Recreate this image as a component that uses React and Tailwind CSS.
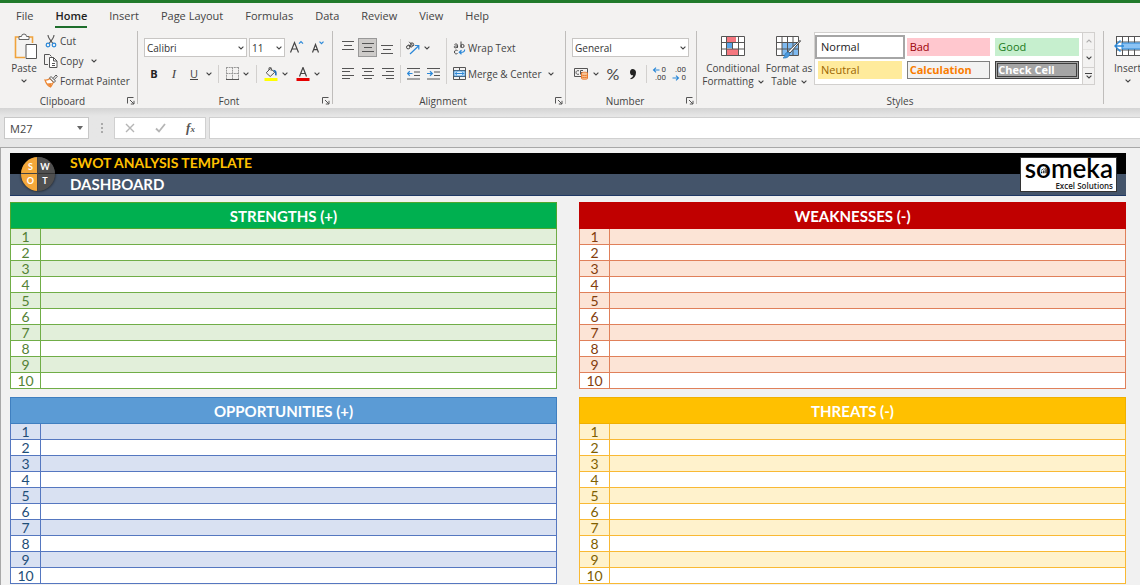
import React from "react";

const TABS = ["File", "Home", "Insert", "Page Layout", "Formulas", "Data", "Review", "View", "Help"];

function Chevron({ className = "" }) {
  return (
    <svg viewBox="0 0 6 4" className={"w-[6px] h-[4px] " + className} fill="none" stroke="#444" strokeWidth="1.1" aria-hidden="true">
      <path d="M.6.6 3 3 5.4.6" />
    </svg>
  );
}

function Sep({ className = "h-[18px]" }) {
  return <span className={"w-px shrink-0 bg-[#d2d0ce] " + className} />;
}

function IconButton({ label, className = "w-5", children }) {
  return (
    <button type="button" aria-label={label} className={"h-[19px] shrink-0 flex items-center justify-center hover:bg-[#dcdcdc] " + className}>
      {children}
    </button>
  );
}

function MenuArrow({ label }) {
  return (
    <IconButton label={label} className="w-[10px]">
      <Chevron />
    </IconButton>
  );
}

function Group({ title, launcher = true, className = "", children }) {
  return (
    <section aria-label={title} className={"relative flex shrink-0 flex-col " + className}>
      <div className="h-16">{children}</div>
      <div className="flex h-[14px] items-center pr-px">
        <span className="flex-1 text-center">{title}</span>
        {launcher && (
          <button type="button" aria-label={title + " settings"} className="flex w-3 justify-center">
            <svg viewBox="0 0 8 8" className="size-2" fill="none" stroke="#555" aria-hidden="true">
              <path d="M.5 6.5v-6h6M3 3l4 4M7 3.8V7H3.8" />
            </svg>
          </button>
        )}
      </div>
      <span className="absolute right-0 top-px h-[73px] w-px bg-[#bfbdbb]" />
    </section>
  );
}

function Picker({ label, value, options, className }) {
  return (
    <label className={"relative block " + className}>
      <span className="sr-only">{label}</span>
      <select defaultValue={value} className="block h-[19px] w-full appearance-none border border-[#c8c6c4] bg-white py-0 pl-[2px] text-[10px] leading-[14px] text-[#333] outline-none">
        {options.map((o) => (
          <option key={o}>{o}</option>
        ))}
      </select>
      <Chevron className="pointer-events-none absolute right-[3px] top-[8px]" />
    </label>
  );
}

function Lines({ rows, className = "w-3 h-[13px]" }) {
  return (
    <svg viewBox="0 0 12 13" className={className} stroke="#555" aria-hidden="true">
      {rows.map(([x1, x2, y], i) => (
        <path key={i} d={`M${x1} ${y}H${x2}`} />
      ))}
    </svg>
  );
}

function Clipboard() {
  return (
    <Group title="Clipboard" className="w-[138px]">
      <div className="flex pl-[9px] pt-[3px]">
        <button type="button" className="flex w-[30px] flex-col items-center">
          <svg viewBox="0 0 24 27" className="ml-1 h-[27px] w-6" fill="none" aria-hidden="true">
            <path d="M5 4H1.5v20.5H11M15 4h3.5v6" stroke="#f0a33c" strokeWidth="1.6" />
            <path d="M5 6.500V3.500h2.500a2.500 2.500 0 0 1 5 0H15v3z" fill="#fafafa" stroke="#666" />
            <path d="M12 11.500h10.500v14H12z" fill="#fff" stroke="#555" />
          </svg>
          <span className="leading-4">Paste</span>
          <Chevron className="mt-[3px]" />
        </button>
        <div className="flex flex-col pl-[5px] pt-px">
          <button type="button" className="flex h-[14px] items-center gap-[2px]">
            <svg viewBox="0 0 14 14" className="size-[14px]" fill="none" aria-hidden="true">
              <path d="M4 1c0 3 2.500 5.500 5 8.500M10 1c0 3-2.500 5.500-5 8.500" stroke="#555" strokeWidth="1.100" />
              <circle cx="4" cy="11" r="1.800" stroke="#2b88d8" strokeWidth="1.200" />
              <circle cx="10" cy="11" r="1.800" stroke="#2b88d8" strokeWidth="1.200" />
            </svg>
            Cut
          </button>
          <button type="button" className="mt-[6px] flex h-[14px] items-center gap-[2px]">
            <svg viewBox="0 0 14 14" className="size-[14px]" fill="none" stroke="#555" aria-hidden="true">
              <path d="M4 10.500H.5v-10h5l2 2" />
              <path d="M5.500 3.500h4l3.500 3.500v6.500H5.500z" fill="#fff" />
              <path d="M9.500 3.500V7H13M8 9.500h3M8 11.500h3" />
            </svg>
            Copy
            <Chevron className="ml-[6px]" />
          </button>
          <button type="button" className="mt-[6px] flex h-[14px] items-center gap-[2px] whitespace-nowrap">
            <svg viewBox="0 0 14 14" className="size-[14px]" fill="none" aria-hidden="true">
              <path d="M1 6c2 .3 3.500-.2 5-1.500L9.500 8C8.500 10 7.500 12 6.500 13 4 12 2 9 1 6z" fill="#fff" stroke="#ed8733" strokeWidth="1.200" />
              <path d="M3 9.500 8 9l-1.500 4z" fill="#ed8733" />
              <path d="m5.500 4 1.500-1.500L11.500 7 10 8.500zM9 4.500 12 1l1.300 1.300L10.200 5.700" fill="#fff" stroke="#555" />
            </svg>
            Format Painter
          </button>
        </div>
      </div>
    </Group>
  );
}

function Font() {
  return (
    <Group title="Font" className="w-[195px]">
      <div className="flex flex-col gap-[7px] pl-[6px] pt-2">
        <div className="flex items-center">
          <Picker label="Font" value="Calibri" options={["Calibri", "Arial", "Cambria"]} className="w-[103px]" />
          <Picker label="Font size" value="11" options={["9", "10", "11", "12", "14"]} className="ml-[2px] w-9" />
          <IconButton label="Increase font size" className="ml-px w-[21px]">
            <svg viewBox="0 0 15 15" className="size-[15px]" fill="none" aria-hidden="true">
              <path d="M1.500 12.500 5.500 2.500l4 10M3 9h5" stroke="#444" strokeWidth="1.200" />
              <path d="m10 3.700 2-2 2 2" stroke="#2b88d8" strokeWidth="1.200" />
            </svg>
          </IconButton>
          <IconButton label="Decrease font size" className="w-[21px]">
            <svg viewBox="0 0 15 15" className="size-[15px]" fill="none" aria-hidden="true">
              <path d="m2.500 12.500 3-8 3 8M3.600 9.700h3.800" stroke="#444" strokeWidth="1.200" />
              <path d="m9.500 1.700 2 2 2-2" stroke="#2b88d8" strokeWidth="1.200" />
            </svg>
          </IconButton>
        </div>
        <div className="flex items-center">
          <IconButton label="Bold"><b className="text-[11px] text-[#222]">B</b></IconButton>
          <IconButton label="Italic"><i className="font-['Liberation_Serif',serif] text-[13px]">I</i></IconButton>
          <IconButton label="Underline"><u className="text-[11px]">U</u></IconButton>
          <MenuArrow label="Underline styles" />
          <Sep className="mx-1 h-[18px]" />
          <IconButton label="Borders" className="w-[18px]">
            <svg viewBox="0 0 13 13" className="size-[13px]" fill="none" stroke="#999" aria-hidden="true">
              <path d="M.5 0v12M12.500 0v12M0 .5h13M6.500 0v12M0 6.500h13" strokeDasharray="2 .6" />
              <path d="M0 12.500h13" stroke="#555" />
            </svg>
          </IconButton>
          <MenuArrow label="Border styles" />
          <Sep className="mx-[5px] h-[18px]" />
          <IconButton label="Fill colour" className="w-[18px]">
            <svg viewBox="0 0 14 14" className="size-[14px]" fill="none" aria-hidden="true">
              <path d="M6.500 1.500 2.200 5.800l4 3.700 4.500-4.200zM5 3V.8h2.200v3" stroke="#555" />
              <path d="M9.500 3.500c2 0 2.700 1.500 2.300 4.800" stroke="#1f6cb8" strokeWidth="1.600" />
              <path d="M.5 11h13v3H.5z" fill="#ff0" />
            </svg>
          </IconButton>
          <MenuArrow label="More fill colours" />
          <IconButton label="Font colour" className="ml-1 w-[18px]">
            <svg viewBox="0 0 14 14" className="size-[14px]" fill="none" aria-hidden="true">
              <path d="m3.500 9.500 3.500-9 3.500 9M4.700 6.500h4.600" stroke="#444" strokeWidth="1.200" />
              <path d="M.5 11h13v3H.5z" fill="#e60000" />
            </svg>
          </IconButton>
          <MenuArrow label="More font colours" />
        </div>
      </div>
    </Group>
  );
}

function Indent({ right }) {
  return (
    <svg viewBox="0 0 13 13" className="size-[13px]" fill="none" aria-hidden="true">
      <path d="M0 1.500h13M7 5h6M7 8.500h6M0 12h13" stroke="#555" />
      <path d={right ? "M0 6.500h5M3 4.300 5.300 6.500 3 8.700" : "M.5 6.500h5M2.800 4.300.5 6.500l2.300 2.200"} stroke="#2b88d8" strokeWidth="1.200" />
    </svg>
  );
}

function Alignment() {
  return (
    <Group title="Alignment" className="w-[233px]">
      <div className="flex pl-[5px] pt-2">
        <div className="flex w-[108px] flex-col gap-[7px]">
          <div className="flex items-center">
            <IconButton label="Top align"><Lines rows={[[0, 12, 0.5], [2, 10, 4.5], [0, 12, 8.5]]} /></IconButton>
            <IconButton label="Middle align" className="w-[19px] border border-[#999] bg-[#cdcbc9]"><Lines rows={[[0, 12, 2.5], [2, 10, 6.5], [0, 12, 10.5]]} /></IconButton>
            <IconButton label="Bottom align"><Lines rows={[[0, 12, 4.5], [2, 10, 8.5], [0, 12, 12.5]]} /></IconButton>
            <Sep className="ml-[3px] h-[18px]" />
            <IconButton label="Orientation" className="ml-px w-5">
              <svg viewBox="0 0 15 14" className="h-[14px] w-[15px]" fill="none" aria-hidden="true">
                <g stroke="#444" strokeWidth="1">
                  <circle cx="3.200" cy="6.200" r="1.700" />
                  <path d="m3.600 3.600 2.800 3" />
                  <circle cx="7" cy="3.600" r="1.700" />
                  <path d="m4.200.8 3.800 4" />
                </g>
                <path d="m5 13 8.500-8M9.800 4.500h4v4" stroke="#2b88d8" strokeWidth="1.200" />
              </svg>
            </IconButton>
            <MenuArrow label="Orientation options" />
          </div>
          <div className="flex items-center">
            <IconButton label="Align left"><Lines rows={[[0, 12, 1.5], [0, 8, 4.5], [0, 12, 8.5], [0, 8, 11.5]]} /></IconButton>
            <IconButton label="Centre"><Lines rows={[[0, 12, 1.5], [2, 10, 4.5], [0, 12, 8.5], [2, 10, 11.5]]} /></IconButton>
            <IconButton label="Align right"><Lines rows={[[0, 12, 1.5], [4, 12, 4.5], [0, 12, 8.5], [4, 12, 11.5]]} /></IconButton>
            <Sep className="ml-[2px] h-[18px]" />
            <IconButton label="Decrease indent" className="ml-[2px] w-5"><Indent /></IconButton>
            <IconButton label="Increase indent"><Indent right /></IconButton>
          </div>
        </div>
        <Sep className="h-[46px]" />
        <div className="flex flex-col gap-[7px] pl-[6px]">
          <button type="button" className="flex h-[19px] items-center gap-[2px]">
            <svg viewBox="0 0 12 14" className="h-[14px] w-[13px]" fill="none" stroke="#444" aria-hidden="true">
              <path d="M1 3.500c1-.8 3-.8 3 .8v2.500M4 5c-3-.2-3.500.4-3.300 1.200C1 7.200 3.500 7 4 5.800M7.500.500v6.300" />
              <circle cx="9" cy="5" r="1.600" />
              <path d="M4 9.500c-1.500-.8-3-.3-3 1.500s1.500 2.300 3 1.500" />
              <path d="M11 8.500c.5 2-1 3-5 2.800M8 9.200 5.800 11.300 8 13.300" stroke="#2b88d8" strokeWidth="1.200" />
            </svg>
            Wrap Text
          </button>
          <div className="flex items-center">
            <button type="button" className="flex h-[19px] items-center gap-[2px] whitespace-nowrap">
              <svg viewBox="0 0 13 13" className="size-[13px]" fill="none" aria-hidden="true">
                <path d="M.5.5h12v12H.5zM.5 3.500h12M.5 9.500h12M6.500.500v3M6.500 9.500v3" stroke="#555" />
                <path d="M1 4h11v5H1z" fill="#e3f0fb" stroke="#2b88d8" strokeWidth=".8" />
                <path d="M2 6.500h9M4 4.700 2.200 6.500 4 8.300M9 4.700l1.800 1.800L9 8.300" stroke="#2b88d8" />
              </svg>
              Merge &amp; Center
            </button>
            <span className="w-1" />
            <MenuArrow label="Merge options" />
          </div>
        </div>
      </div>
    </Group>
  );
}

function DecimalIcon({ top, bottom, right }) {
  return (
    <span className="relative flex h-4 w-[14px] flex-col font-['Roboto',sans-serif] text-[8px] leading-[8px] text-[#444]">
      <span className="self-end">{top}</span>
      <span className="self-end">{bottom}</span>
      <svg viewBox="0 0 7 6" className={"absolute left-0 h-[6px] w-2 " + (right ? "bottom-px" : "top-px")} fill="none" stroke="#2b88d8" strokeWidth="1.100" aria-hidden="true">
        <path d={right ? "M0 3h6M3.500.6 6 3 3.500 5.400" : "M7 3H1M3.500.6 1 3l2.500 2.400"} />
      </svg>
    </span>
  );
}

function NumberGroup() {
  return (
    <Group title="Number" className="w-[131px]">
      <div className="flex flex-col gap-[7px] pl-[6px] pt-2">
        <Picker label="Number format" value="General" options={["General", "Number", "Currency", "Date"]} className="w-[117px]" />
        <div className="flex items-center">
          <IconButton label="Accounting format" className="w-[19px]">
            <svg viewBox="0 0 15 13" className="h-[13px] w-[15px]" fill="none" aria-hidden="true">
              <path d="M.5 1.500h13v8H.5z" stroke="#555" />
              <path d="M5 3.800c-2-.5-3 .3-3 1.700s1 2.200 3 1.700M9 3.500H6.500v4M6.500 5.500H9" stroke="#555" />
              <path d="M7.500 6c0-1 6-1 6 0v5.500c0 1-6 1-6 0z" fill="#f7c596" stroke="#ed7d31" />
              <path d="M7.500 8c1 .7 5 .7 6 0M7.500 10c1 .7 5 .7 6 0" stroke="#ed7d31" />
            </svg>
          </IconButton>
          <MenuArrow label="Accounting options" />
          <IconButton label="Percent style" className="ml-[2px] w-5"><span className="font-['Lato',sans-serif] text-[16px]">%</span></IconButton>
          <IconButton label="Comma style">
            <svg viewBox="0 0 8 12" className="h-3 w-2" aria-hidden="true">
              <path d="M3.500 1C5.500 1 7 2.400 7 4.500 7 8 5 10.500 1.800 11.300l-.5-1C3 9.600 4 8.500 4.200 7.300 2.300 7.600 1 6.300 1 4.200 1 2.300 2 1 3.500 1z" fill="#222" />
            </svg>
          </IconButton>
          <Sep className="ml-[3px] h-[18px]" />
          <IconButton label="Increase decimal" className="ml-[2px] w-5"><DecimalIcon top="0" bottom=".00" /></IconButton>
          <IconButton label="Decrease decimal" className="w-5"><DecimalIcon top=".00" bottom="0" right /></IconButton>
        </div>
      </div>
    </Group>
  );
}

const CELL_STYLES = [
  ["Normal", "pl-[3px] bg-white text-[#222] outline-2 outline-offset-1 outline-[#a6a6a6]"],
  ["Bad", "pl-[3px] bg-[#ffc7ce] text-[#9c0006]"],
  ["Good", "pl-[3px] bg-[#c6efce] text-[#1b7a1b]"],
  ["Neutral", "pl-[3px] bg-[#ffeb9c] text-[#9c6500]"],
  ["Calculation", "pl-[2px] border border-[#7f7f7f] bg-[#f2f2f2] font-bold text-[#fa7d00]"],
  ["Check Cell", "border-3 border-double border-[#3f3f3f] bg-[#a5a5a5] font-bold text-white"],
];

function Styles() {
  return (
    <Group title="Styles" launcher={false} className="w-[407px]">
      <div className="flex pl-[6px] pt-[2px]">
        <button type="button" className="flex w-[60px] flex-col items-center pt-1 leading-[13px]">
          <svg viewBox="0 0 24 20" className="mb-[6px] h-5 w-6" fill="none" aria-hidden="true">
            <path d="M.5.5h23v19H.5z" fill="#fff" />
            <path d="M5 1h10v5H5zM5 13h12v6H5z" fill="#f4777f" />
            <path d="M5 7h7v5H5z" fill="#5aa5e8" />
            <path d="M.5.5h23v19H.5zM5.500 0v20M11.500 6v7M17.500 0v20M0 6.500h24M0 13h24" stroke="#555" />
          </svg>
          <span>Conditional</span>
          <span className="flex items-center gap-1">Formatting <Chevron /></span>
        </button>
        <button type="button" className="ml-[2px] flex w-[48px] flex-col items-center whitespace-nowrap pt-1 leading-[13px]">
          <svg viewBox="0 0 26 24" className="h-6 w-[26px]" fill="none" aria-hidden="true">
            <path d="M.5.5h22v19H.5z" fill="#fff" />
            <path d="M6 7h16v12H6z" fill="#7fbaf0" />
            <path d="M.5.5h22v19H.5zM6 0v20M11.500 0v20M17 0v20M0 6.500h23M0 13h23" stroke="#555" />
            <path d="M24.500 5 14 17l-2-1.500L22.500 5.500c1-1 2.500-1 2-.5z" fill="#fff" stroke="#444" />
            <path d="M13.500 17c.5 3-2 5.500-6.500 5 1.500-1 1.500-2 2-3.500.6-2 3-3 4.500-1.500z" fill="#4a98dc" stroke="#2b78b8" strokeWidth=".7" />
          </svg>
          <span className="mt-[2px]">Format as</span>
          <span className="flex items-center gap-1">Table <Chevron /></span>
        </button>
        <div className="ml-px mr-[9px] flex h-[53px] flex-1 border border-[#d2d0ce] bg-white">
          <div className="grid flex-1 grid-cols-3 content-center gap-[5px] pl-[3px] pr-[3px]">
            {CELL_STYLES.map(([name, look]) => (
              <button key={name} type="button" className={"flex h-[18px] items-center text-left text-[11px] " + look}>
                {name}
              </button>
            ))}
          </div>
          <div className="flex w-3 flex-col divide-y divide-[#d2d0ce] border-l border-[#d2d0ce] bg-[#f3f2f1]">
            <button type="button" aria-label="Previous styles" className="flex flex-1 items-center justify-center opacity-40"><Chevron className="rotate-180" /></button>
            <button type="button" aria-label="Next styles" className="flex flex-1 items-center justify-center"><Chevron /></button>
            <button type="button" aria-label="All styles" className="flex flex-1 flex-col items-center justify-center gap-px">
              <span className="h-px w-[7px] bg-[#444]" />
              <Chevron />
            </button>
          </div>
        </div>
      </div>
    </Group>
  );
}

function Cells() {
  return (
    <section aria-label="Cells" className="flex-1 overflow-hidden pl-[10px] pt-[6px]">
      <button type="button" className="flex w-[27px] flex-col items-center leading-[13px]">
        <svg viewBox="0 0 27 20" className="mb-[6px] h-5 w-[27px]" fill="none" aria-hidden="true">
          <path d="M2.500.5h24v19h-24z" fill="#fff" />
          <path d="M2.500.5h24.500M2.500 19.500H27M2.500 0v20M8.500 0v20M14.500 0v20M20.500 0v20M2 6h25M2 14h25" stroke="#555" />
          <path d="M8 7h19v6H8z" fill="#8cc3f4" stroke="#2b88d8" />
          <path d="M10 10H1M6.500 4.500 1 10l5.500 5.500" stroke="#2b88d8" strokeWidth="1.400" />
        </svg>
        Insert
        <Chevron className="mt-1" />
      </button>
    </section>
  );
}

function FormulaBar() {
  return (
    <div className="flex h-10 items-start border-b border-[#a8a8a8] bg-[#e5e5e5] bg-linear-to-b from-[#d4d4d4] to-[#e6e6e6] to-20% pl-1 pt-[9px]">
      <label className="relative">
        <span className="sr-only">Name box</span>
        <input defaultValue="M27" className="block h-[22px] w-[85px] border border-[#c8c8c8] bg-white pl-[5px] text-[11px] text-[#444] outline-none" />
        <svg viewBox="0 0 6 4" className="absolute right-[6px] top-[9px] h-1 w-[6px]" aria-hidden="true"><path d="M0 0h6L3 4z" fill="#666" /></svg>
      </label>
      <svg viewBox="0 0 2 10" className="ml-[12px] mt-[6px] h-[10px] w-[2px]" fill="#aaa" aria-hidden="true">
        <path d="M0 0h2v2H0zM0 4h2v2H0zM0 8h2v2H0z" />
      </svg>
      <div className="ml-[11px] flex h-[22px] w-[92px] items-center justify-around border border-[#d0d0d0] bg-white">
        <button type="button" aria-label="Cancel">
          <svg viewBox="0 0 10 10" className="size-[10px]" stroke="#b5b5b5" strokeWidth="1.400" aria-hidden="true"><path d="m1 1 8 8M9 1 1 9" /></svg>
        </button>
        <button type="button" aria-label="Enter">
          <svg viewBox="0 0 11 10" className="h-[10px] w-[11px]" fill="none" stroke="#b5b5b5" strokeWidth="1.800" aria-hidden="true"><path d="m1 5.500 3 3L10 1" /></svg>
        </button>
        <button type="button" className="font-['Liberation_Serif',serif] text-[13px] font-bold italic leading-4 text-[#555]">
          f<span className="text-[9px]">x</span>
        </button>
      </div>
      <input aria-label="Formula" className="ml-[3px] h-[22px] min-w-0 flex-1 border border-r-0 border-[#d0d0d0] bg-white px-2 text-[11px] outline-none" />
    </div>
  );
}

function SwotBadge() {
  return (
    <div className="grid size-[34px] grid-cols-2 grid-rows-2 overflow-hidden rounded-full bg-[#333] text-center font-['Lato',sans-serif] text-[9px] font-bold leading-[14px] text-white shadow-[0_0_2px_1px_rgba(0,0,0,0.35)]">
      <span className="border-b border-r border-[#444] bg-[#f4a83a] pl-[3px] pt-[3px]">S</span>
      <span className="border-b border-[#333] bg-[#505050] pr-[3px] pt-[3px]">W</span>
      <span className="border-r border-[#444] bg-[#f4a83a] pl-[3px]">O</span>
      <span className="bg-[#505050] pr-[3px]">T</span>
    </div>
  );
}

function SomekaLogo() {
  return (
    <div className="flex h-[35px] w-[97px] flex-col items-end justify-end gap-[3px] border border-[#333] bg-white pr-[3px] text-black">
      <div className="relative font-['Lato',sans-serif] text-[26px] font-semibold leading-[20px]">
        someka
        <svg viewBox="0 0 8 8" className="absolute left-[16px] top-[9px] size-[7px]" aria-hidden="true">
          <path d="M0 7V5h1.500v2zM2.500 7V4H4v3zM5 7V2.500h1.500V7z" fill="#111" />
          <path d="m0 4 3-2 1 .5L7 0" stroke="#111" strokeWidth=".8" fill="none" />
        </svg>
      </div>
      <div className="text-[8px] font-semibold leading-[10px] text-[#222]">Excel Solutions</div>
    </div>
  );
}

function Banner() {
  return (
    <header className="flex h-[43px] items-center border-b border-[#1f3864] bg-linear-to-b from-black from-50% to-[#44546a] to-50% pl-[11px] pr-[9px]">
      <SwotBadge />
      <div className="flex-1 pl-[15px] font-['Lato',sans-serif] font-bold">
        <h1 className="text-[14px] leading-[20px] text-[#ffc000]">SWOT ANALYSIS TEMPLATE</h1>
        <h2 className="text-[15px] leading-[22px] text-white">DASHBOARD</h2>
      </div>
      <SomekaLogo />
    </header>
  );
}

const QUADRANTS = [
  { title: "STRENGTHS (+)", head: "bg-[#00b050] border-[#4ea72e]", cell: "border-[#70ad47]", band: "odd:bg-[#e2efda]", num: "text-[#548235]" },
  { title: "WEAKNESSES (-)", head: "bg-[#c00000] border-[#c00000]", cell: "border-[#e0805a]", band: "odd:bg-[#fce4d6]", num: "text-[#833c0c]" },
  { title: "OPPORTUNITIES (+)", head: "bg-[#5b9bd5] border-[#3f7fc0]", cell: "border-[#5577c0]", band: "odd:bg-[#d9e1f2]", num: "text-[#1f4e78]" },
  { title: "THREATS (-)", head: "bg-[#ffc000] border-[#f0b000]", cell: "border-[#f9b934]", band: "odd:bg-[#fff2cc]", num: "text-[#806000]" },
];

function Quadrant({ q }) {
  return (
    <table className="w-full table-fixed border-collapse">
      <colgroup>
        <col className="w-[30px]" />
        <col />
      </colgroup>
      <thead>
        <tr className="h-[26px]">
          <th colSpan={2} className={"border p-0 font-['Lato',sans-serif] text-[15px] font-bold leading-5 text-white " + q.head}>{q.title}</th>
        </tr>
      </thead>
      <tbody>
        {Array.from({ length: 10 }, (_, i) => (
          <tr key={i} className={"h-4 bg-white " + q.band}>
            <th scope="row" className={"border p-0 font-['Lato',sans-serif] text-[14px] font-normal leading-[15px] " + q.cell + " " + q.num}>{i + 1}</th>
            <td className={"border p-0 " + q.cell} />
          </tr>
        ))}
      </tbody>
    </table>
  );
}

export default function App() {
  return (
    <div className="flex min-h-screen flex-col overflow-x-hidden bg-[#f1f1f1] font-['Open_Sans',sans-serif] text-[10px] leading-[14px] text-[#444]">
      <div className="border-t-3 border-[#217a2b] bg-[#f3f2f1]">
        <nav className="flex h-[27px] items-start gap-[22px] whitespace-nowrap pl-4 pt-[2px] text-[11px]">
          {TABS.map((t) => (
            <button
              key={t}
              type="button"
              className={t === "Home" ? "border-b-2 border-[#1e6e2c] font-semibold leading-[21px] text-[#222]" : "leading-[21px]"}
            >
              {t}
            </button>
          ))}
        </nav>
        <div className="flex h-[78px]">
          <Clipboard />
          <Font />
          <Alignment />
          <NumberGroup />
          <Styles />
          <Cells />
        </div>
      </div>
      <FormulaBar />
      <main className="flex-1 border-l border-[#a8a8a8] pl-[9px] pr-[14px] pt-[5px]">
        <Banner />
        <div className="mt-[6px] grid grid-cols-2 gap-x-[22px] gap-y-2">
          {QUADRANTS.map((q) => (
            <Quadrant key={q.title} q={q} />
          ))}
        </div>
      </main>
    </div>
  );
}
